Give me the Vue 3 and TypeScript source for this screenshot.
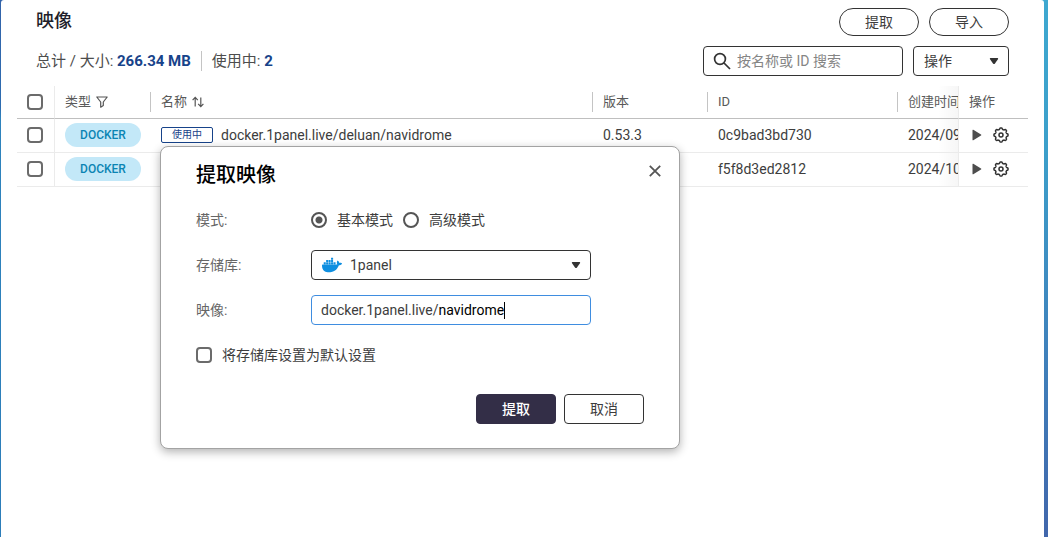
<script setup lang="ts">
import { ref } from 'vue'

interface ImageRow {
  key: number
  name: string
  inUse: boolean
  version: string
  id: string
  created: string
}

const rows: ImageRow[] = [
  { key: 1, name: 'docker.1panel.live/deluan/navidrome', inUse: true, version: '0.53.3', id: '0c9bad3bd730', created: '2024/09' },
  { key: 2, name: '', inUse: false, version: '', id: 'f5f8d3ed2812', created: '2024/10' },
]

const mode = ref<'basic' | 'advanced'>('basic')
const imageName = ref('navidrome')
const search = ref('')
const setDefault = ref(false)
const dialogOpen = ref(true)

// Outline of the settings cog: eight flattened teeth around a circle.
function cogPath(): string {
  const points: string[] = []
  const steps = 96
  for (let i = 0; i < steps; i++) {
    const a = (i / steps) * Math.PI * 2
    const wave = Math.tanh(2 * Math.cos(8 * a))
    const r = 6.4 + 0.7 * wave
    points.push(`${(8 + r * Math.sin(a)).toFixed(2)} ${(8 - r * Math.cos(a)).toFixed(2)}`)
  }
  return `M${points.join('L')}Z`
}
const cog = cogPath()
</script>

<template>
  <div class="desktop">
    <main class="window">
      <header class="top">
        <h1>映像</h1>
        <div class="pills">
          <button type="button" class="pill">提取</button>
          <button type="button" class="pill">导入</button>
        </div>
      </header>

      <section class="tools">
        <p class="summary">
          <span>总计 / 大小: <b>266.34 MB</b></span>
          <span class="in-use">使用中: <b>2</b></span>
        </p>
        <div class="filters">
          <label class="search">
            <svg width="18" height="18" viewBox="0 0 18 18" fill="none" stroke="#333" stroke-width="1.7">
              <circle cx="7" cy="7" r="5.4" />
              <path d="M11 11L17 17" />
            </svg>
            <input v-model="search" type="text" placeholder="按名称或 ID 搜索" aria-label="搜索" />
          </label>
          <div class="select action-select">
            <select aria-label="操作">
              <option>操作</option>
            </select>
            <svg width="10" height="8" viewBox="0 0 10 8"><path d="M1.5 1h7q1 0 .6 1L6 6.5q-1 1-2 0L.9 2q-.4-1 .6-1z" fill="#333" /></svg>
          </div>
        </div>
      </section>

      <table>
        <colgroup>
          <col class="c-check" />
          <col class="c-type" />
          <col />
          <col class="c-version" />
          <col class="c-id" />
          <col class="c-created" />
          <col class="c-action" />
        </colgroup>
        <thead>
          <tr>
            <th class="check"><input type="checkbox" aria-label="全选" /></th>
            <th class="split">
              <span class="head">类型
                <svg width="12" height="12" viewBox="0 0 12 12" fill="none" stroke="#555" stroke-width="1.2"><path d="M.8 1h10.4L7.3 6v3.6L4.7 11.2V6z" stroke-linejoin="round" /></svg>
              </span>
            </th>
            <th class="split">
              <span class="head">名称
                <svg width="12" height="12" viewBox="0 0 12 12" fill="none" stroke="#555" stroke-width="1.2"><path d="M3.2 10.5V1.5M.6 4.1L3.2 1.3l2.6 2.8M8.8 1.5v9M6.2 7.9l2.6 2.8 2.6-2.8" /></svg>
              </span>
            </th>
            <th class="split">版本</th>
            <th class="split">ID</th>
            <th class="created">创建时间</th>
            <th class="action">操作</th>
          </tr>
        </thead>
        <tbody>
          <tr v-for="row in rows" :key="row.key">
            <td class="check"><input type="checkbox" :aria-label="row.id" /></td>
            <td><span class="type">DOCKER</span></td>
            <td>
              <span class="name"><span v-if="row.inUse" class="badge">使用中</span>{{ row.name }}</span>
            </td>
            <td>{{ row.version }}</td>
            <td>{{ row.id }}</td>
            <td class="created">{{ row.created }}</td>
            <td class="action">
              <span class="actions">
                <button type="button" class="icon" aria-label="启动">
                  <svg width="10" height="12" viewBox="0 0 10 12"><path d="M.5 1.2q0-.8.8-.4L9 5.5q.8.5 0 1L1.3 11.2q-.8.4-.8-.4z" fill="#4d4d4d" /></svg>
                </button>
                <button type="button" class="icon" aria-label="设置">
                  <svg width="16" height="16" viewBox="0 0 16 16" fill="none" stroke="#333" stroke-width="1.5"><path :d="cog" /><circle cx="8" cy="8" r="2" /></svg>
                </button>
              </span>
            </td>
          </tr>
        </tbody>
      </table>
    </main>

    <form v-if="dialogOpen" class="dialog" role="dialog" aria-labelledby="dialog-title" @submit.prevent>
      <div class="dialog-head">
        <h2 id="dialog-title">提取映像</h2>
        <button type="button" class="icon" aria-label="关闭" @click="dialogOpen = false">
          <svg width="12" height="12" viewBox="0 0 12 12" stroke="#555" stroke-width="1.8"><path d="M.8.8l10.4 10.4M11.2.8L.8 11.2" /></svg>
        </button>
      </div>

      <div class="field">
        <span class="label">模式:</span>
        <div class="radios">
          <label><input v-model="mode" type="radio" name="mode" value="basic" />基本模式</label>
          <label><input v-model="mode" type="radio" name="mode" value="advanced" />高级模式</label>
        </div>
      </div>

      <div class="field">
        <label class="label" for="repo">存储库:</label>
        <div class="select">
          <svg class="whale" width="20" height="16" viewBox="0 3 24 18">
            <path fill="#0f8fe0" d="M13.983 11.078h2.119a.186.186 0 00.186-.185V9.006a.186.186 0 00-.186-.186h-2.119a.185.185 0 00-.185.185v1.888c0 .102.083.185.185.185m-2.954-5.430h2.118a.186.186 0 00.186-.186V3.574a.186.186 0 00-.186-.185h-2.118a.185.185 0 00-.185.185v1.888c0 .102.083.185.185.185m0 2.716h2.118a.187.187 0 00.186-.186V6.290a.186.186 0 00-.186-.185h-2.118a.185.185 0 00-.185.185v1.887c0 .102.082.185.185.186m-2.930 0h2.120a.186.186 0 00.184-.186V6.290a.185.185 0 00-.185-.185H8.100a.185.185 0 00-.185.185v1.887c0 .102.083.185.185.186m-2.964 0h2.119a.186.186 0 00.185-.186V6.290a.185.185 0 00-.185-.185H5.136a.186.186 0 00-.186.185v1.887c0 .102.084.185.186.186m5.893 2.715h2.118a.186.186 0 00.186-.185V9.006a.186.186 0 00-.186-.186h-2.118a.185.185 0 00-.185.185v1.888c0 .102.082.185.185.185m-2.930 0h2.120a.185.185 0 00.184-.185V9.006a.185.185 0 00-.184-.186h-2.120a.185.185 0 00-.184.185v1.888c0 .102.083.185.185.185m-2.964 0h2.119a.185.185 0 00.185-.185V9.006a.185.185 0 00-.184-.186h-2.120a.186.186 0 00-.186.186v1.887c0 .102.084.185.186.185m-2.920 0h2.120a.185.185 0 00.184-.185V9.006a.185.185 0 00-.184-.186h-2.120a.185.185 0 00-.184.185v1.888c0 .102.082.185.185.185M23.763 9.890c-.065-.051-.672-.510-1.954-.510-.338.001-.676.030-1.010.087-.248-1.700-1.653-2.530-1.716-2.566l-.344-.199-.226.327c-.284.438-.490.922-.612 1.430-.230.970-.090 1.882.403 2.661-.595.332-1.550.413-1.744.420H.751a.751.751 0 00-.750.748 11.376 11.376 0 00.692 4.062c.545 1.428 1.355 2.480 2.410 3.124 1.180.723 3.100 1.137 5.275 1.137.983.003 1.963-.086 2.930-.266a12.248 12.248 0 003.823-1.389c.980-.567 1.860-1.288 2.610-2.136 1.252-1.418 1.998-2.997 2.553-4.400h.221c1.372 0 2.215-.549 2.680-1.009.309-.293.550-.650.707-1.046l.098-.288Z" />
          </svg>
          <select id="repo">
            <option>1panel</option>
          </select>
          <svg width="10" height="8" viewBox="0 0 10 8"><path d="M1.5 1h7q1 0 .6 1L6 6.5q-1 1-2 0L.9 2q-.4-1 .6-1z" fill="#333" /></svg>
        </div>
      </div>

      <div class="field">
        <label class="label" for="image">映像:</label>
        <div class="image-box">
          <span>docker.1panel.live/</span><input id="image" v-model="imageName" type="text" /><i class="caret"></i>
        </div>
      </div>

      <label class="default"><input v-model="setDefault" type="checkbox" />将存储库设置为默认设置</label>

      <div class="buttons">
        <button type="submit" class="btn primary">提取</button>
        <button type="button" class="btn" @click="dialogOpen = false">取消</button>
      </div>
    </form>
  </div>
</template>

<style>
body {
  margin: 0;
}
</style>

<style scoped>
* {
  box-sizing: border-box;
}

.desktop {
  position: relative;
  display: flex;
  min-height: 100vh;
  padding: 0 4px 0 1px;
  background:
    linear-gradient(#3ea8d0, #3c9fca 28%, #3f84bd 62%, #4166ab) right / 8px 100% no-repeat,
    linear-gradient(#3263aa, #2d6cb0 20%, #2e83bd 22%, #2c7db9);
  font-family: Roboto, "Noto Sans CJK SC", sans-serif;
  font-size: 14px;
  line-height: 20px;
  color: #3d3d3d;
}

.window {
  flex: 1;
  min-width: 0;
  padding: 0 16px;
  background: #fff;
  border-radius: 3px 3px 0 0;
}

button,
input,
select {
  margin: 0;
  padding: 0;
  border: 0;
  font: inherit;
  color: inherit;
  background: none;
  outline: none;
}

svg {
  display: block;
  flex: none;
}

.top,
.tools {
  display: flex;
  justify-content: space-between;
  padding: 0 19px;
}

.top {
  padding-top: 8px;
}

h1 {
  margin: 0;
  font-size: 18px;
  line-height: 26px;
  font-weight: 500;
  color: #1f1f2b;
}

.pills,
.filters {
  display: flex;
  gap: 10px;
}

.pill {
  width: 80px;
  height: 28px;
  border: 1px solid #333;
  border-radius: 14px;
}

.tools {
  align-items: center;
  padding-top: 10px;
  padding-bottom: 10px;
}

.summary {
  display: flex;
  margin: 0;
  font-size: 15px;
  color: #4d4d4d;
}

.summary b {
  font-weight: 700;
  color: #17438a;
}

.in-use {
  margin-left: 10px;
  padding-left: 10px;
  border-left: 1px solid #c4c4c4;
}

.search {
  display: flex;
  align-items: center;
  gap: 6px;
  width: 200px;
  height: 30px;
  padding: 0 9px;
  border: 1px solid #333;
  border-radius: 4px;
}

.search input {
  flex: 1;
  min-width: 0;
}

.search input::placeholder {
  color: #858585;
}

.select {
  display: flex;
  align-items: center;
  height: 30px;
  padding: 0 9px 0 10px;
  border: 1px solid #333;
  border-radius: 4px;
}

.select select {
  flex: 1;
  min-width: 0;
  appearance: none;
}

.action-select {
  width: 96px;
}

table {
  width: 100%;
  table-layout: fixed;
  border-spacing: 0;
}

.c-check {
  width: 38px;
}

.c-type {
  width: 96px;
}

.c-version {
  width: 115px;
}

.c-id {
  width: 190px;
}

.c-created {
  width: 60px;
}

.c-action {
  width: 70px;
}

th,
td {
  padding: 0 0 0 10px;
  overflow: hidden;
  text-align: left;
  white-space: nowrap;
}

th {
  height: 33px;
  font-size: 13px;
  font-weight: 400;
  color: #595959;
  border-bottom: 1px solid #bfbfbf;
}

td {
  height: 34px;
  padding-bottom: 1px;
  border-bottom: 1px solid #ebebeb;
}

.check {
  border-right: 1px solid #ebebeb;
}

.split {
  background: linear-gradient(#c4c4c4, #c4c4c4) right / 1px 20px no-repeat;
}

.created {
  background: linear-gradient(to right, rgba(0, 0, 0, 0), rgba(0, 0, 0, 0.035)) right / 20px 100% no-repeat;
}

.action {
  border-left: 1px solid #ebebeb;
}

.head,
.name,
.actions {
  display: flex;
  align-items: center;
  gap: 5px;
}

.name {
  gap: 8px;
}

.actions {
  gap: 11px;
  padding-left: 3px;
}

.type {
  display: block;
  width: 76px;
  border-radius: 12px;
  font-size: 12px;
  line-height: 24px;
  font-weight: 500;
  text-align: center;
  color: #0b84b3;
  background: #c3e8f8;
}

.badge {
  width: 52px;
  border: 1px solid #17438a;
  border-radius: 2px;
  font-size: 10px;
  line-height: 14px;
  text-align: center;
  color: #17438a;
}

.icon {
  display: block;
  cursor: pointer;
}

input[type="checkbox"],
input[type="radio"] {
  display: block;
  flex: none;
  width: 16px;
  height: 16px;
  appearance: none;
  border: 2px solid #6b6b6b;
  border-radius: 4px;
  background: #fff;
}

input[type="radio"] {
  border-color: #555;
  border-radius: 50%;
}

input[type="radio"]:checked {
  background: radial-gradient(circle, #555 0 3px, #fff 4px);
}

input[type="checkbox"]:checked {
  background: #6b6b6b;
}

.dialog {
  position: absolute;
  top: 146px;
  left: 160px;
  display: flex;
  flex-direction: column;
  gap: 15px;
  width: 520px;
  padding: 14px 35px 24px;
  border: 1px solid #a3a3a3;
  border-radius: 8px;
  background: #fff;
  box-shadow: 0 3px 10px rgba(0, 0, 0, 0.3);
}

.dialog-head {
  display: flex;
  justify-content: space-between;
  height: 29px;
  margin-right: -17px;
}

.dialog-head .icon {
  height: 20px;
}

h2 {
  margin: 0;
  font-size: 20px;
  line-height: 28px;
  font-weight: 500;
  color: #000;
}

.field {
  display: grid;
  grid-template-columns: 115px 280px;
  align-items: center;
  height: 30px;
}

.label {
  color: #666;
}

.radios,
.radios label,
.default {
  display: flex;
  align-items: center;
  gap: 10px;
}

.default {
  height: 30px;
}

.whale {
  margin-right: 8px;
}

.image-box {
  display: flex;
  align-items: center;
  height: 30px;
  padding: 0 9px;
  border: 1px solid #3f8de0;
  border-radius: 4px;
}

.image-box input {
  field-sizing: content;
  color: #000;
}

.caret {
  width: 1px;
  height: 17px;
  background: #000;
}

.buttons {
  display: flex;
  justify-content: flex-end;
  gap: 8px;
  padding-top: 9px;
}

.btn {
  width: 80px;
  height: 30px;
  border: 1px solid #333;
  border-radius: 4px;
}

.primary {
  border-color: #332e47;
  font-weight: 500;
  color: #fff;
  background: #332e47;
}
</style>
